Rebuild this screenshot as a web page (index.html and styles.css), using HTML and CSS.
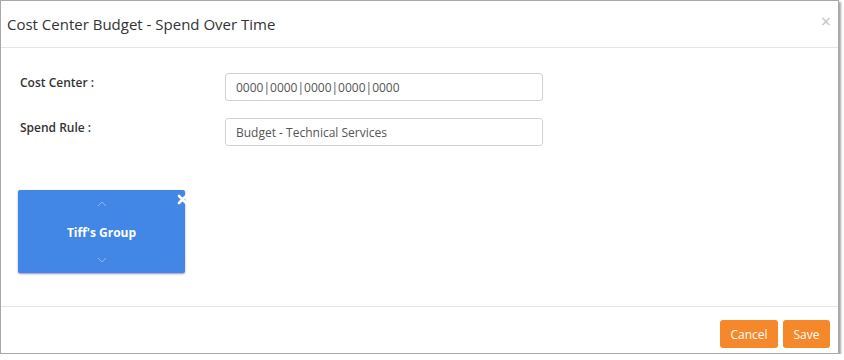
FILE: index.html
```html
<!DOCTYPE html>
<html lang="en">
<head>
  <meta charset="UTF-8">
  <title>Cost Center Budget - Spend Over Time</title>
  <link rel="stylesheet" href="styles.css">
</head>
<body>
<div class="modal">
  <div class="modal-header">
    <h4>Cost Center Budget - Spend Over Time</h4>
    <span class="close">&times;</span>
  </div>

  <div class="modal-body">
    <div class="form-row">
      <label>Cost Center :</label>
      <input type="text" value="0000|0000|0000|0000|0000">
    </div>
    <div class="form-row">
      <label>Spend Rule :</label>
      <input type="text" value="Budget - Technical Services">
    </div>

    <div class="group-card">
      <span class="chev">
        <svg width="10" height="6" viewBox="0 0 10 6"><path d="M1 5 L5 1 L9 5" fill="none" stroke="currentColor" stroke-width="1"/></svg>
      </span>
      <span class="group-name">Tiff's Group</span>
      <span class="chev">
        <svg width="10" height="6" viewBox="0 0 10 6"><path d="M1 1 L5 5 L9 1" fill="none" stroke="currentColor" stroke-width="1"/></svg>
      </span>
      <span class="remove">
        <svg width="11" height="11" viewBox="0 0 11 11"><path d="M2 2 L9 9 M9 2 L2 9" stroke="#fff" stroke-width="2.6" stroke-linecap="round"/></svg>
      </span>
    </div>
  </div>

  <div class="modal-footer">
    <button class="btn">Cancel</button>
    <button class="btn">Save</button>
  </div>
</div>
</body>
</html>
```

FILE: styles.css
```css
body {
  margin: 0;
  background-color: #ffffff;
  font-family: "Open Sans", Arial, sans-serif;
  color: #333;
}
.modal {
  width: 837px;
  height: 352px;
  border: 1px solid #a8a8a8;
  box-shadow: 2px 2px 2px rgba(0, 0, 0, 0.35);
  background-color: #ffffff;
  display: flex;
  flex-direction: column;
}
.modal-header {
  height: 46px;
  border-bottom: 1px solid #e5e5e5;
  display: flex;
  align-items: center;
  justify-content: space-between;
  padding: 0 7px 0 6px;
}
.modal-header h4 {
  margin: 0;
  font-size: 15px;
  font-weight: normal;
  color: #333;
  padding-bottom: 1px;
}
.close {
  color: #c4c4c4;
  font-size: 18px;
  line-height: 1;
  margin-bottom: 6px;
}
.modal-body {
  flex: 1;
  padding: 25px 0 0 17px;
}
.form-row {
  display: flex;
  align-items: flex-start;
  margin-bottom: 17px;
}
.form-row label {
  width: 205px;
  font-size: 12px;
  font-weight: 600;
  color: #333;
  padding: 1px 0 0 2px;
}
.form-row input {
  width: 318px;
  height: 28px;
  box-sizing: border-box;
  border: 1px solid #d2d2d2;
  border-radius: 3px;
  padding: 0 10px;
  font-family: "Open Sans", Arial, sans-serif;
  font-size: 12px;
  color: #555;
}
.group-card {
  position: relative;
  width: 167px;
  height: 83px;
  margin-top: 44px;
  background-color: #4287e6;
  border-radius: 2px;
  box-shadow: 0 1px 2px rgba(60, 40, 120, 0.5);
  display: flex;
  flex-direction: column;
  align-items: center;
  justify-content: space-between;
  padding: 11px 0 10px;
  box-sizing: border-box;
  color: #fff;
}
.chev {
  color: #8fb6ef;
  display: flex;
}
.group-name {
  font-size: 12px;
  font-weight: bold;
}
.remove {
  position: absolute;
  top: 4px;
  right: -3px;
  display: flex;
}
.modal-footer {
  height: 47px;
  border-top: 1px solid #e5e5e5;
  display: flex;
  justify-content: flex-end;
  align-items: flex-start;
  gap: 5px;
  padding: 13px 8px 0 0;
  box-sizing: border-box;
}
.btn {
  background-color: #f5882a;
  color: #ffffff;
  border: none;
  border-radius: 3px;
  height: 28px;
  padding: 0 10px;
  font-family: "Open Sans", Arial, sans-serif;
  font-size: 12px;
  cursor: pointer;
}
.btn:first-child {
  width: 58px;
}
.btn:last-child {
  width: 47px;
}
```
